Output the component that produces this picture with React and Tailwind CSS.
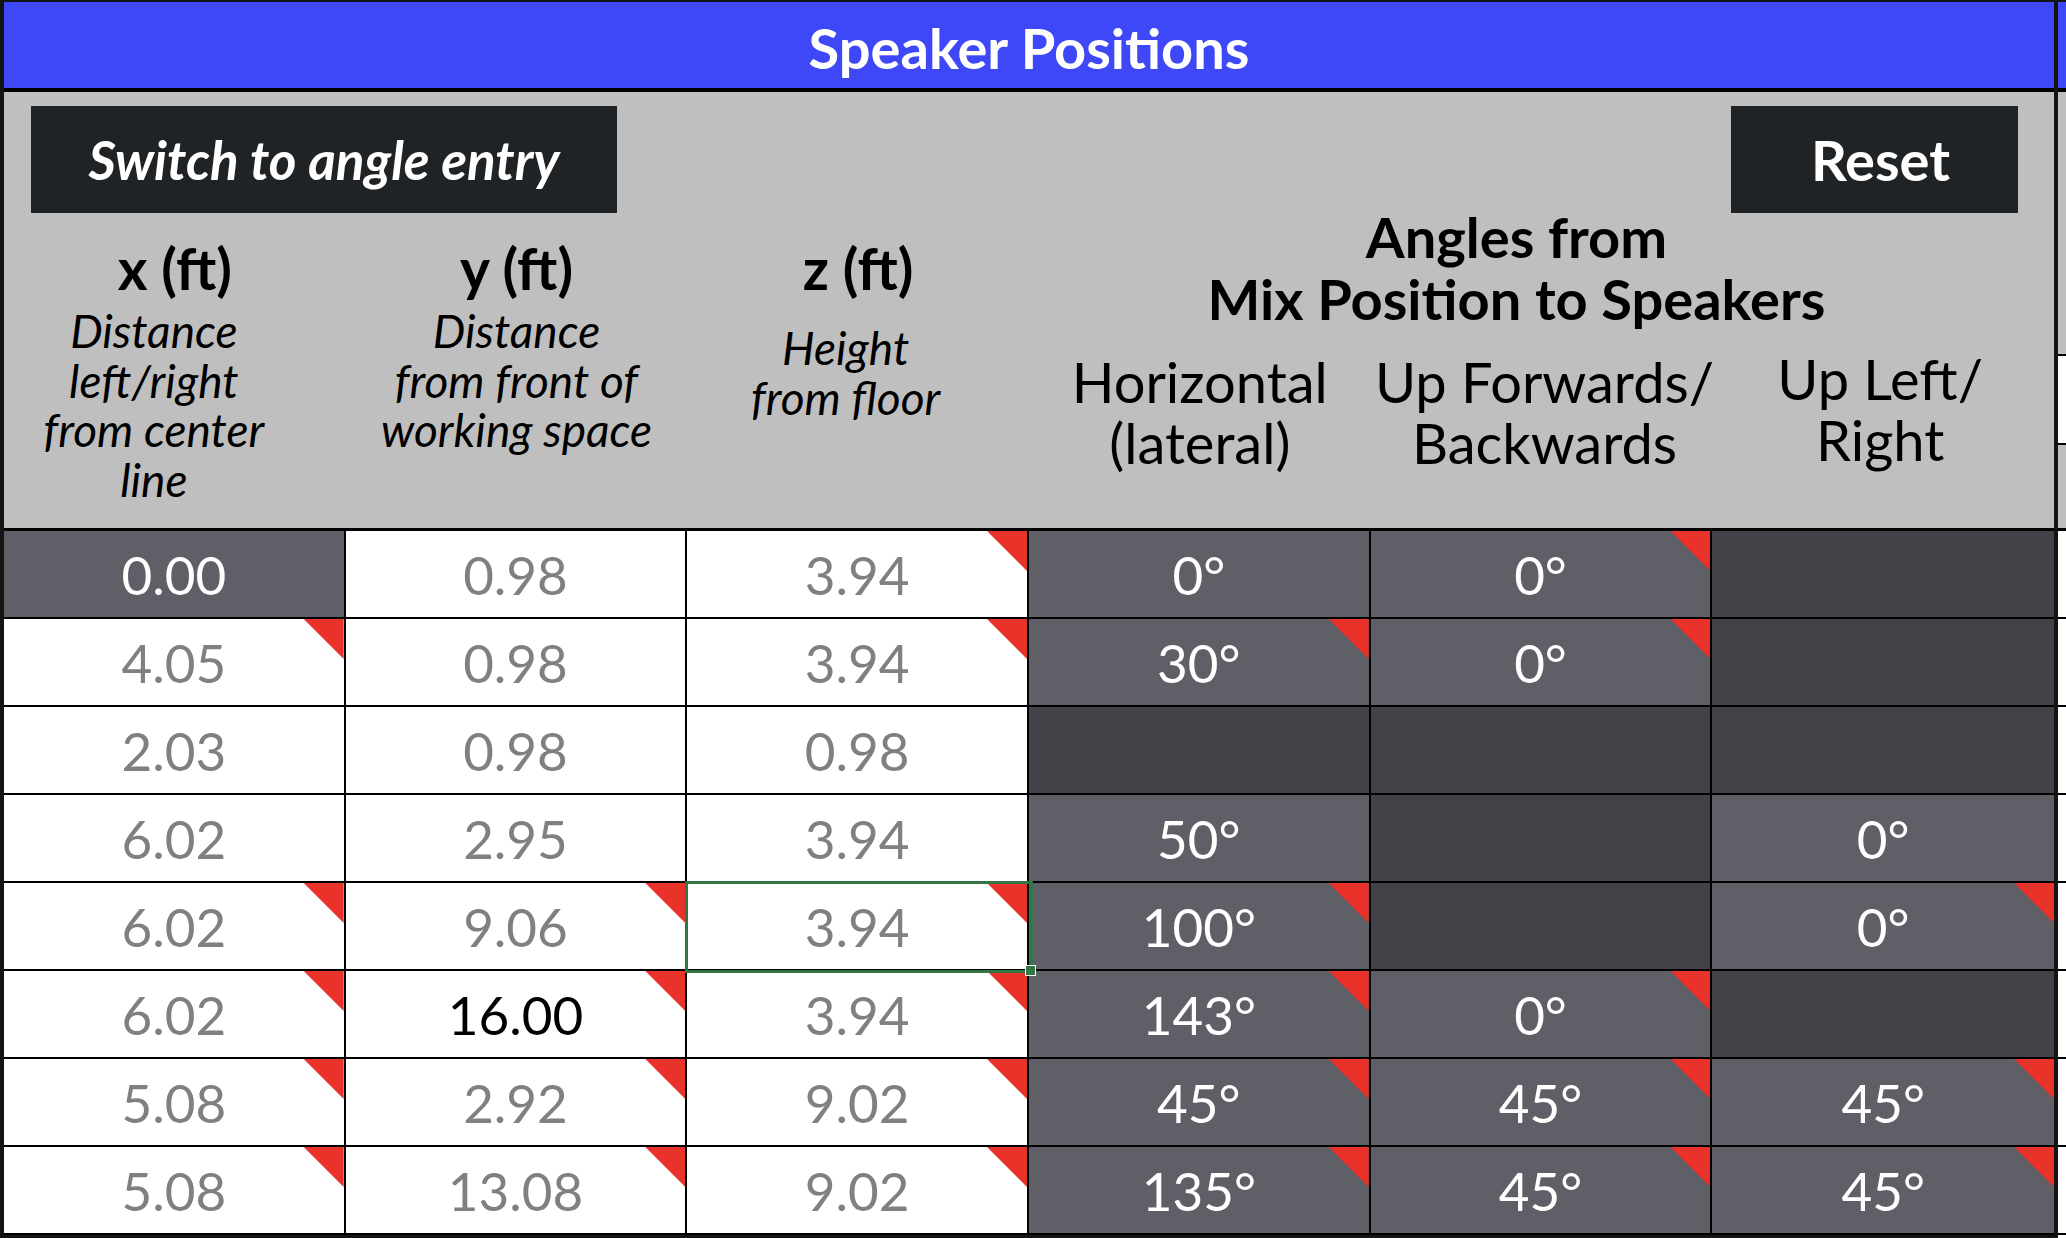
import React from "react";

const TRI =
  "absolute top-0 right-0 w-[40px] h-[40px] bg-[#E8322A] [clip-path:polygon(0_0,100%_0,100%_100%)]";

// c: 'w' white cell, 'm' mid dark, 'd' darker empty
const rows = [
  [
    { v: "0.00", c: "m" },
    { v: "0.98", c: "w" },
    { v: "3.94", c: "w", t: 1 },
    { v: "0°", c: "m" },
    { v: "0°", c: "m", t: 1 },
    { c: "d" },
  ],
  [
    { v: "4.05", c: "w", t: 1 },
    { v: "0.98", c: "w" },
    { v: "3.94", c: "w", t: 1 },
    { v: "30°", c: "m", t: 1 },
    { v: "0°", c: "m", t: 1 },
    { c: "d" },
  ],
  [
    { v: "2.03", c: "w" },
    { v: "0.98", c: "w" },
    { v: "0.98", c: "w" },
    { c: "d" },
    { c: "d" },
    { c: "d" },
  ],
  [
    { v: "6.02", c: "w" },
    { v: "2.95", c: "w" },
    { v: "3.94", c: "w" },
    { v: "50°", c: "m" },
    { c: "d" },
    { v: "0°", c: "m" },
  ],
  [
    { v: "6.02", c: "w", t: 1 },
    { v: "9.06", c: "w", t: 1 },
    { v: "3.94", c: "w", t: 1, sel: 1 },
    { v: "100°", c: "m", t: 1 },
    { c: "d" },
    { v: "0°", c: "m", t: 1 },
  ],
  [
    { v: "6.02", c: "w", t: 1 },
    { v: "16.00", c: "w", t: 1, black: 1 },
    { v: "3.94", c: "w", t: 1 },
    { v: "143°", c: "m", t: 1 },
    { v: "0°", c: "m", t: 1 },
    { c: "d" },
  ],
  [
    { v: "5.08", c: "w", t: 1 },
    { v: "2.92", c: "w", t: 1 },
    { v: "9.02", c: "w", t: 1 },
    { v: "45°", c: "m", t: 1 },
    { v: "45°", c: "m", t: 1 },
    { v: "45°", c: "m", t: 1 },
  ],
  [
    { v: "5.08", c: "w", t: 1 },
    { v: "13.08", c: "w", t: 1 },
    { v: "9.02", c: "w", t: 1 },
    { v: "135°", c: "m", t: 1 },
    { v: "45°", c: "m", t: 1 },
    { v: "45°", c: "m", t: 1 },
  ],
];

function Cell({ cell, last }) {
  const bg =
    cell.c === "w"
      ? cell.black
        ? "bg-white text-black"
        : "bg-white text-[#808080]"
      : cell.c === "m"
      ? "bg-[#5F5F67] text-white"
      : "bg-[#434248]";
  return (
    <div
      className={`relative flex items-center justify-center text-[53px] leading-none ${bg} ${
        last ? "" : "border-r-2 border-black"
      }`}
    >
      {cell.v ? <span>{cell.v}</span> : null}
      {cell.t ? <div className={TRI} /> : null}
      {cell.sel ? (
        <div className="absolute z-10 -top-[2px] -left-[2px] -right-[6px] -bottom-[4px] border-[3px] border-solid border-[#337544]">
          <div className="absolute -right-[6px] -bottom-[6px] w-[11px] h-[11px] bg-[#337544] border border-white" />
        </div>
      ) : null}
    </div>
  );
}

export default function App() {
  return (
    <div className="flex w-[2066px] h-[1238px] overflow-hidden bg-white font-['Lato',sans-serif]">
      <div className="w-[2058px] shrink-0 flex flex-col border-l-4 border-r-4 border-t-2 border-b-[3px] border-[#141414]">
        {/* Title bar */}
        <div className="h-[90px] shrink-0 border-b-4 border-black bg-[#3F48F6] text-white font-bold text-[56px] leading-[62px] text-center pt-[15px]">
          Speaker Positions
        </div>

        {/* Header */}
        <div className="h-[439px] shrink-0 border-b-[3px] border-black bg-[#BFBFBF] flex text-black">
          <div className="w-[1025px] shrink-0 flex flex-col">
            <div className="shrink-0 mt-[14px] ml-[27px] w-[586px] h-[107px] bg-[#202326] flex items-center justify-center text-white font-bold italic text-[53px] leading-none">
              Switch to angle entry
            </div>
            <div className="grid grid-cols-3 mt-[27px] text-center">
              <div className="flex flex-col items-center">
                <div className="font-bold text-[57px] leading-[56px]">x (ft)</div>
                <div className="italic text-[46px] leading-[49.5px] mt-[10px] pr-[42px]">
                  Distance
                  <br />
                  left/right
                  <br />
                  from center
                  <br />
                  line
                </div>
              </div>
              <div className="flex flex-col items-center">
                <div className="font-bold text-[57px] leading-[56px]">y (ft)</div>
                <div className="italic text-[46px] leading-[49.5px] mt-[10px]">
                  Distance
                  <br />
                  from front of
                  <br />
                  working space
                </div>
              </div>
              <div className="flex flex-col items-center">
                <div className="font-bold text-[57px] leading-[56px]">z (ft)</div>
                <div className="italic text-[46px] leading-[50px] mt-[27px] pr-[25px]">
                  Height
                  <br />
                  from floor
                </div>
              </div>
            </div>
          </div>

          <div className="w-[1025px] shrink-0 flex flex-col">
            <div className="shrink-0 mt-[14px] self-end mr-[36px] w-[287px] h-[107px] bg-[#202326] flex items-center justify-center pl-[12px] text-white font-bold text-[56px] leading-none">
              Reset
            </div>
            <div className="-mt-[7px] pr-[50px] text-center font-bold text-[56px] leading-[62px] whitespace-nowrap">
              Angles from
              <br />
              Mix Position to Speakers
            </div>
            <div className="grid grid-cols-3 mt-[21px] text-center text-[56px] leading-[61px] whitespace-nowrap">
              <div>
                Horizontal
                <br />
                (lateral)
              </div>
              <div className="translate-x-[3px]">
                Up Forwards/
                <br />
                Backwards
              </div>
              <div className="-mt-[3px] -translate-x-[3px]">
                Up Left/
                <br />
                Right
              </div>
            </div>
          </div>
        </div>

        {/* Data rows */}
        {rows.map((r, i) => (
          <div key={i} className="grid grid-cols-6 h-[88px] shrink-0 border-b-2 border-black">
            {r.map((c, j) => (
              <Cell key={j} cell={c} last={j === 5} />
            ))}
          </div>
        ))}
      </div>

      {/* Neighbouring sheet column */}
      <div className="w-[8px] shrink-0 flex flex-col">
        <div className="h-[2px] bg-[#141414]" />
        <div className="h-[86px] bg-[#3F48F6]" />
        <div className="h-[4px] bg-black" />
        <div className="h-[262px] bg-[#BFBFBF]" />
        <div className="h-[2px] bg-black" />
        <div className="h-[87px] bg-white" />
        <div className="h-[2px] bg-black" />
        <div className="h-[83px] bg-[#BFBFBF]" />
        <div className="h-[3px] bg-black" />
        {rows.map((_, i) => (
          <div key={i} className="h-[88px] shrink-0 border-b-2 border-black bg-white" />
        ))}
      </div>
    </div>
  );
}
